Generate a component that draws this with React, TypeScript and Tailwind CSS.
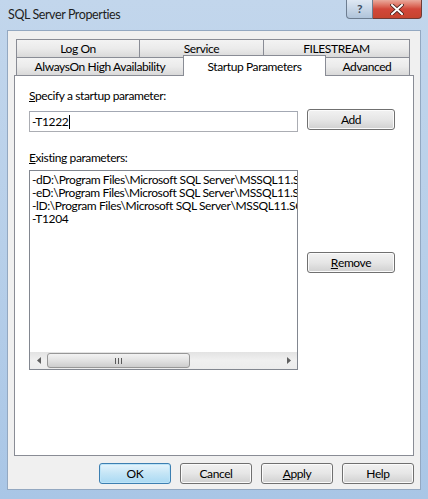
import React from 'react';

const font = { fontFamily: 'Lato, "Noto Sans", sans-serif' };

function Tab({ label, w, selected }: { label: string; w: string; selected?: boolean }) {
  if (selected) {
    return (
      <div
        className={`${w} relative z-10 -mt-[2px] h-[21px] border border-b-0 border-[#898c95] bg-white flex items-start justify-center pt-[2px] -mx-px`}
      >
        {label}
      </div>
    );
  }
  return (
    <div
      className={`${w} h-[18px] border border-[#898c95] border-b-0 -ml-px first:ml-0 bg-gradient-to-b from-[#f3f3f3] via-[#ebebeb] to-[#d9d9d9] flex items-center justify-center`}
    >
      {label}
    </div>
  );
}

function Button({ children, w, primary }: { children: React.ReactNode; w: string; primary?: boolean }) {
  return (
    <button
      className={`${w} h-[21px] rounded-[3px] border text-[12px] leading-none flex items-center justify-center ${
        primary
          ? 'border-[#3c7fb1] bg-gradient-to-b from-[#e5f4fc] via-[#c4e5f6] to-[#a9d9f3] shadow-[inset_0_0_0_1px_#bde4f8]'
          : 'border-[#707070] bg-gradient-to-b from-[#f2f2f2] via-[#e6e6e6] to-[#d0d0d0] shadow-[inset_0_0_0_1px_#fbfbfb]'
      }`}
    >
      {children}
    </button>
  );
}

export default function App() {
  const params = [
    '-dD:\\Program Files\\Microsoft SQL Server\\MSSQL11.SQLEXPRESS\\MSSQL\\DATA\\master.mdf',
    '-eD:\\Program Files\\Microsoft SQL Server\\MSSQL11.SQLEXPRESS\\MSSQL\\Log\\ERRORLOG',
    '-lD:\\Program Files\\Microsoft SQL Server\\MSSQL11.SQLEXPRESS\\MSSQL\\DATA\\mastlog.ldf',
    '-T1204',
  ];

  return (
    <div
      style={font}
      className="w-[428px] h-[499px] overflow-hidden flex flex-col text-[12px] tracking-[-0.4px] text-black bg-gradient-to-b from-[#c2d6ec] via-[#b7cfe9] to-[#a9c6e6] px-[7px] pb-[9px]"
    >
      {/* title bar */}
      <div className="h-[30px] flex items-start relative">
        <div className="pt-[6px] pl-px text-[12.5px] leading-[18px] text-[#1e1e1e]">SQL Server Properties</div>
        <div className="absolute right-[-1px] top-0 flex">
          <div className="w-[27px] h-[19px] rounded-bl-[4px] border border-t-0 border-[#6d7d90] bg-gradient-to-b from-[#dfe8f3] via-[#c7d6e7] to-[#b0c4da] flex items-center justify-center text-[12px] text-[#3b4c60] font-bold leading-none">
            ?
          </div>
          <div className="w-[49px] h-[19px] rounded-br-[4px] border border-t-0 border-l-0 border-[#6e3b36] bg-gradient-to-b from-[#e9a99c] via-[#d2473a] to-[#c6442f] flex items-center justify-center">
            <svg width="14" height="11" viewBox="0 0 14 11">
              <path d="M2 1 L12 10 M12 1 L2 10" stroke="#3f1c18" strokeWidth="3.6" strokeLinecap="square" />
              <path d="M2 1 L12 10 M12 1 L2 10" stroke="#ffffff" strokeWidth="2" strokeLinecap="square" />
            </svg>
          </div>
        </div>
      </div>

      {/* client area */}
      <div className="flex-1 bg-[#f0f0f0] border border-[#93a8c1] flex flex-col px-[6px]">
        {/* tabs */}
        <div className="pt-[8px] pl-[2px] pr-[2px]">
          <div className="flex">
            <Tab label="Log On" w="w-[124px]" />
            <Tab label="Service" w="w-[125px]" />
            <Tab label="FILESTREAM" w="w-[147px]" />
          </div>
          <div className="flex">
            <Tab label="AlwaysOn High Availability" w="w-[168px]" />
            <Tab label="Startup Parameters" w="w-[143px]" selected />
            <Tab label="Advanced" w="w-[86px]" />
          </div>
        </div>

        {/* tab page */}
        <div className="-mt-px h-[381px] bg-white border border-[#898c95] flex pl-[14px]">
          <div className="w-[269px] flex flex-col pt-[12px]">
            <div className="leading-[15px]">
              <span className="underline">S</span>pecify a startup parameter:
            </div>
            <div className="mt-[8px] h-[21px] border border-[#abadb3] border-t-[#a3a8b3] flex items-center pl-[2px] leading-[15px]">
              -T1222<span className="w-px h-[14px] bg-black ml-px" />
            </div>
            <div className="mt-[18px] leading-[15px]">
              <span className="underline">E</span>xisting parameters:
            </div>
            <div className="mt-[5px] h-[200px] border border-[#828790] flex flex-col">
              <div className="flex-1 overflow-hidden pl-[2px] pt-[2px]">
                {params.map((p) => (
                  <div key={p} className="whitespace-nowrap leading-[13px]">
                    {p}
                  </div>
                ))}
              </div>
              <div className="h-[17px] bg-gradient-to-b from-[#e3e3e3] via-[#f0f0f0] to-[#ececec] flex items-center">
                <div className="w-[17px] flex items-center justify-center">
                  <svg width="4" height="7" viewBox="0 0 4 7">
                    <path d="M4 0 L0 3.5 L4 7 Z" fill="#606060" />
                  </svg>
                </div>
                <div className="w-[143px] h-[15px] rounded-[3px] border border-[#979797] bg-gradient-to-b from-[#f3f3f3] via-[#e2e2e2] to-[#cdcdcd] flex items-center justify-center">
                  <div className="flex gap-[2px]">
                    <span className="w-px h-[6px] bg-[#5a5a5a]" />
                    <span className="w-px h-[6px] bg-[#5a5a5a]" />
                    <span className="w-px h-[6px] bg-[#5a5a5a]" />
                  </div>
                </div>
                <div className="flex-1" />
                <div className="w-[17px] flex items-center justify-center">
                  <svg width="4" height="7" viewBox="0 0 4 7">
                    <path d="M0 0 L4 3.5 L0 7 Z" fill="#606060" />
                  </svg>
                </div>
              </div>
            </div>
          </div>
          <div className="ml-[9px] flex flex-col pt-[33px]">
            <Button w="w-[88px]">Add</Button>
            <div className="mt-[122px]">
              <Button w="w-[88px]">
                <span className="underline">R</span>emove
              </Button>
            </div>
          </div>
        </div>

        {/* bottom buttons */}
        <div className="mt-[7px] flex justify-end gap-[9px] pr-0">
          <Button w="w-[72px]" primary>
            OK
          </Button>
          <Button w="w-[72px]">Cancel</Button>
          <Button w="w-[72px]">
            <span className="underline">A</span>pply
          </Button>
          <Button w="w-[72px]">Help</Button>
        </div>
      </div>
    </div>
  );
}
